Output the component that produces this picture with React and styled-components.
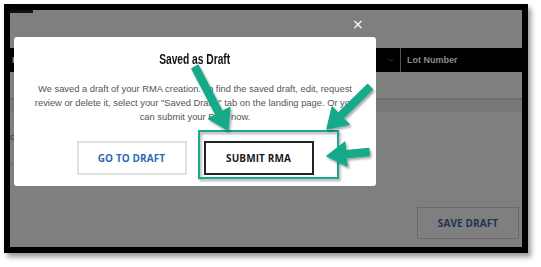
import React from "react";
import styled, { createGlobalStyle } from "styled-components";
import { ChevronDown } from "lucide-react";

const GlobalStyle = createGlobalStyle`
  body {
    margin: 0;
    background: #fff;
    font-family: "Liberation Sans", Arial, sans-serif;
  }
`;

const Stage = styled.div`
  position: relative;
  width: 541px;
  height: 267px;
  padding: 4px 0 0 4px;
  box-sizing: border-box;
`;

const Frame = styled.div`
  position: relative;
  width: 524px;
  height: 249px;
  box-sizing: border-box;
  border: 6px solid #000;
  background: #7f7f7f;
  box-shadow: 3px 4px 5px rgba(0, 0, 0, 0.4);
  display: flex;
  flex-direction: column;
`;

const TabLine = styled.div`
  width: 23px;
  height: 3px;
  background: #111;
  margin-bottom: 35px;
`;

const HeaderBar = styled.div`
  height: 24px;
  background: #000;
  display: flex;
  align-items: center;
  font-size: 9px;
  font-weight: bold;
  color: #8a8a8a;
`;

const HeaderCell = styled.div`
  flex: ${(p) => (p.grow ? 1 : "none")};
  width: ${(p) => (p.w ? `${p.w}px` : "auto")};
  padding-left: ${(p) => p.pad || 0}px;
  height: 100%;
  display: flex;
  align-items: center;
  box-sizing: border-box;
  border-left: ${(p) => (p.sep ? "1px solid #555" : "none")};
`;

const Row = styled.div`
  height: 26px;
  background: #808080;
`;

const RowLine = styled.div`
  height: 2px;
  background: #6c6c6c;
`;

const Band = styled.div`
  height: 12px;
  background: #787878;
`;

const Body = styled.div`
  flex: 1;
  position: relative;
  display: flex;
  flex-direction: column;
  font-size: 9px;
  color: #333;
`;

const Stub = styled.div`
  margin-top: ${(p) => p.top}px;
  height: 10px;
  line-height: 10px;
  color: ${(p) => p.color};
`;

const Footer = styled.div`
  margin-top: auto;
  display: flex;
  justify-content: flex-end;
  padding: 0 3px 8px 0;
`;

const GhostButton = styled.button`
  width: 102px;
  height: 32px;
  background: transparent;
  border: 1px solid #6a6a6a;
  font-family: "Open Sans", "Liberation Sans", sans-serif;
  font-weight: 700;
  font-size: 10px;
  color: #1d3455;
  letter-spacing: 0.1px;
`;

const Modal = styled.div`
  position: absolute;
  left: 4px;
  top: 27px;
  width: 362px;
  height: 149px;
  background: #fff;
  border-radius: 3px;
  box-sizing: border-box;
  padding-top: 13px;
  display: flex;
  flex-direction: column;
  align-items: center;
`;

const Close = styled.div`
  position: absolute;
  left: 342px;
  top: 7px;
  color: #fff;
  font-size: 14px;
  line-height: 14px;
  font-family: "DejaVu Sans", sans-serif;
`;

const Title = styled.h2`
  margin: 0;
  height: 18px;
  line-height: 18px;
  font-size: 14px;
  font-weight: bold;
  color: #111;
  transform: scaleX(0.73);
`;

const Message = styled.p`
  margin: 14px 0 0;
  font-size: 9.35px;
  line-height: 14px;
  color: #555;
  text-align: center;
  white-space: nowrap;
`;

const Actions = styled.div`
  margin-top: 17px;
  display: flex;
  gap: 17px;
`;

const ActionButton = styled.button`
  width: 110px;
  height: 34px;
  box-sizing: border-box;
  background: #fff;
  border: ${(p) => (p.primary ? "2px solid #222" : "2px solid #e2e2e2")};
  color: ${(p) => (p.primary ? "#1a1a1a" : "#2d6bb5")};
  font-family: "Open Sans", "Liberation Sans", sans-serif;
  font-weight: 700;
  font-size: 10px;
  letter-spacing: 0.1px;
`;

const Annotations = styled.svg`
  position: absolute;
  left: 0;
  top: 0;
  pointer-events: none;
`;

const TEAL = "#19a98a";

function arrowPoints(x1, y1, x2, y2, shaft = 3.5, head = 12, headLen = 19) {
  const dx = x2 - x1;
  const dy = y2 - y1;
  const len = Math.hypot(dx, dy);
  const ux = dx / len;
  const uy = dy / len;
  const px = -uy;
  const py = ux;
  const bx = x2 - ux * headLen;
  const by = y2 - uy * headLen;
  const pts = [
    [x1 + px * shaft, y1 + py * shaft],
    [bx + px * shaft, by + py * shaft],
    [bx + px * head, by + py * head],
    [x2, y2],
    [bx - px * head, by - py * head],
    [bx - px * shaft, by - py * shaft],
    [x1 - px * shaft, y1 - py * shaft],
  ];
  return pts.map((p) => p.map((v) => v.toFixed(1)).join(",")).join(" ");
}

const arrows = [
  { x1: 195, y1: 67, x2: 228, y2: 130 },
  { x1: 370, y1: 87, x2: 327, y2: 129 },
  { x1: 369, y1: 152, x2: 327, y2: 156 },
];

export default function App() {
  return (
    <>
      <GlobalStyle />
      <Stage>
        <Frame>
          <TabLine />
          <HeaderBar>
            <HeaderCell grow pad={2}>F</HeaderCell>
            <HeaderCell w={14}>
              <ChevronDown size={10} strokeWidth={1} color="#6c6c6c" />
            </HeaderCell>
            <HeaderCell w={122} sep pad={6}>
              Lot Number
            </HeaderCell>
          </HeaderBar>
          <Row />
          <RowLine />
          <Band />
          <Body>
            <Stub top={20}>o</Stub>
            <Stub top={16} color="#2a4a7a">
              ·
            </Stub>
            <Footer>
              <GhostButton>SAVE DRAFT</GhostButton>
            </Footer>
          </Body>
          <Close>×</Close>
          <Modal>
            <Title>Saved as Draft</Title>
            <Message>
              We saved a draft of your RMA creation. To find the saved draft, edit, request
              <br />
              review or delete it, select your "Saved Drafts" tab on the landing page. Or you
              <br />
              can submit your RMA now.
            </Message>
            <Actions>
              <ActionButton>GO TO DRAFT</ActionButton>
              <ActionButton primary>SUBMIT RMA</ActionButton>
            </Actions>
          </Modal>
        </Frame>
        <Annotations width="541" height="267" viewBox="0 0 541 267">
          <defs>
            <filter id="shade" x="-20%" y="-20%" width="140%" height="140%">
              <feDropShadow dx="1.5" dy="2" stdDeviation="1.2" floodColor="#000" floodOpacity="0.35" />
            </filter>
          </defs>
          <rect
            x="199"
            y="131"
            width="139"
            height="47"
            fill="none"
            stroke={TEAL}
            strokeWidth="2"
            filter="url(#shade)"
          />
          {arrows.map((a, i) => (
            <polygon
              key={i}
              points={arrowPoints(a.x1, a.y1, a.x2, a.y2)}
              fill={TEAL}
              stroke={TEAL}
              strokeWidth="1.5"
              strokeLinejoin="round"
              filter="url(#shade)"
            />
          ))}
        </Annotations>
      </Stage>
    </>
  );
}
